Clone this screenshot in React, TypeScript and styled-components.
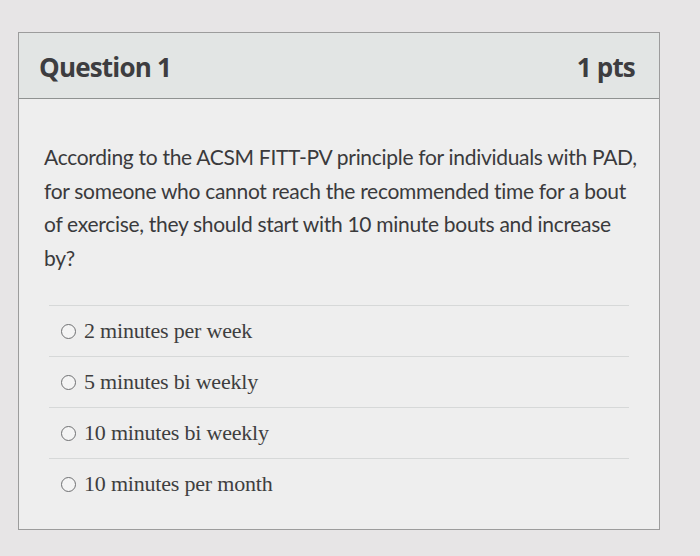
import styled, { createGlobalStyle } from "styled-components";

const Global = createGlobalStyle`
  html, body {
    margin: 0;
    padding: 0;
    background: #e7e5e6;
  }
  body {
    width: 700px;
    height: 556px;
    overflow: hidden;
  }
`;

const Page = styled.div`
  padding: 32px 40px 0 18px;
  box-sizing: border-box;
  height: 556px;
`;

const Card = styled.div`
  background: #eeeeee;
  border: 1px solid #9c9c9c;
  height: 498px;
  box-sizing: border-box;
`;

const Header = styled.div`
  display: flex;
  justify-content: space-between;
  align-items: center;
  height: 66px;
  padding: 2px 24px 0 20px;
  box-sizing: border-box;
  background: #e2e5e4;
  border-bottom: 1px solid #8f9291;
  font-family: "Open Sans", sans-serif;
  font-weight: 700;
  font-size: 26px;
  color: #3d3d40;
  letter-spacing: -0.8px;
`;

const Body = styled.div`
  padding: 41px 20px 0 25px;
`;

const Prompt = styled.p`
  margin: 0 0 31px 0;
  max-width: 596px;
  font-family: "Lato", sans-serif;
  font-size: 21px;
  line-height: 33.5px;
  color: #3a3a3c;
  letter-spacing: -0.3px;
`;

const Options = styled.div`
  margin: 0 10px 0 5px;
  border-top: 1px solid #d6d8d8;
`;

const Option = styled.label`
  display: flex;
  align-items: center;
  gap: 8px;
  height: 50px;
  padding-left: 12px;
  border-bottom: 1px solid #d6d8d8;
  font-family: "Liberation Serif", serif;
  font-size: 22px;
  letter-spacing: -0.2px;
  color: #3e3e40;
  &:last-child {
    border-bottom: none;
  }
`;

const Radio = styled.span`
  width: 15px;
  height: 15px;
  border: 1.5px solid #6f7072;
  border-radius: 50%;
  box-sizing: border-box;
  background: #f4f4f4;
  flex: none;
`;

const answers = [
  "2 minutes per week",
  "5 minutes bi weekly",
  "10 minutes bi weekly",
  "10 minutes per month",
];

export default function App() {
  return (
    <>
      <Global />
      <Page>
        <Card>
          <Header>
            <span>Question 1</span>
            <span>1 pts</span>
          </Header>
          <Body>
            <Prompt>
              According to the ACSM FITT-PV principle for individuals with PAD,
              for someone who cannot reach the recommended time for a bout of
              exercise, they should start with 10 minute bouts and increase by?
            </Prompt>
            <Options>
              {answers.map((a) => (
                <Option key={a}>
                  <Radio />
                  {a}
                </Option>
              ))}
            </Options>
          </Body>
        </Card>
      </Page>
    </>
  );
}
